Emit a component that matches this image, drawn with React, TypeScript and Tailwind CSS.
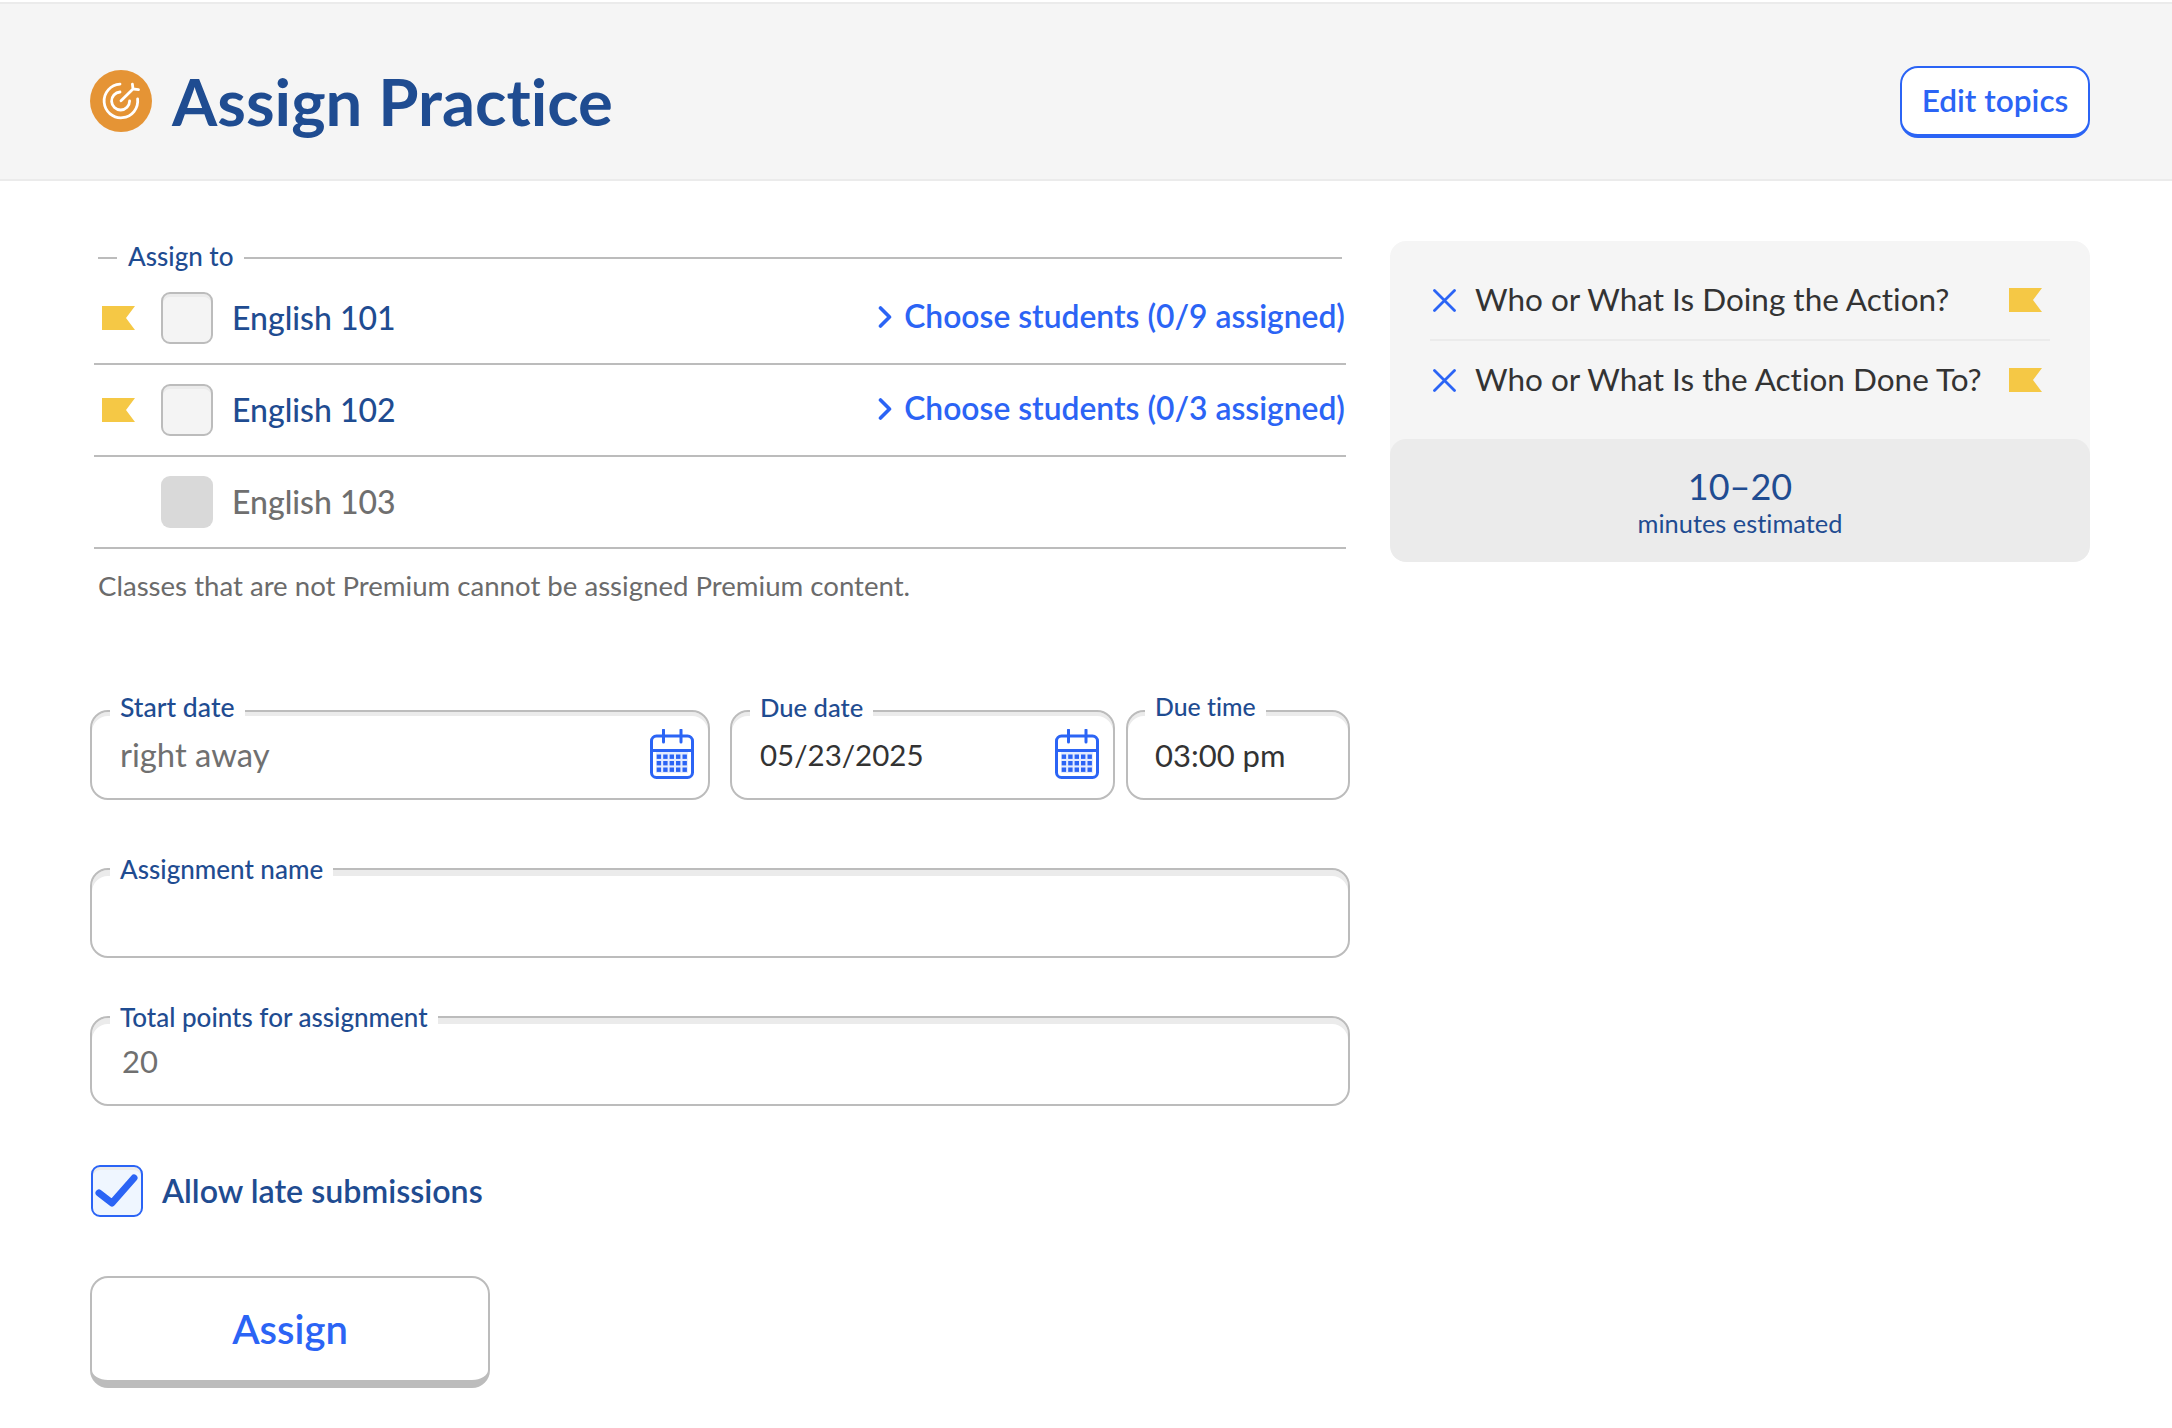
import React from 'react';

const NAVY = 'text-[#1f4c91]';

const Flag = () => (
  <svg width="33" height="24" viewBox="0 0 33 24" className="shrink-0">
    <polygon points="0,0 33,0 24,12 33,24 0,24" fill="#f5c845" />
  </svg>
);

const TargetIcon = () => (
  <svg width="62" height="62" viewBox="0 0 62 62" className="shrink-0">
    <circle cx="31" cy="31" r="31" fill="#e59435" />
    <g fill="none" stroke="#fff" strokeWidth="2.8" strokeLinecap="round">
      <path d="M30 14.2A16.8 16.8 0 1 0 47.6 29" />
      <path d="M30 22A9 9 0 1 0 39.6 31" />
      <path d="M31 30.8L43 19M42.4 14.2L43 19L48.5 19.6" />
    </g>
  </svg>
);

const CalendarIcon = () => (
  <svg width="44" height="50" viewBox="0 0 44 50" className="shrink-0">
    <rect x="1.5" y="7" width="41" height="41.5" rx="5" fill="#fff" stroke="#2b64f5" strokeWidth="3" />
    <rect x="6" y="23" width="32" height="21" fill="#e3ebfe" />
    <path d="M2 21.5H42" stroke="#2b64f5" strokeWidth="3" />
    <path d="M13.5 1V13M31 1V13" stroke="#2b64f5" strokeWidth="3" strokeLinecap="round" />
    {[25.5, 32, 38.5].map((y) =>
      [6.7, 13.2, 19.6, 26, 32.5].map((x) => (
        <rect key={`${x}-${y}`} x={x} y={y} width="4.4" height="4.4" fill="#2b64f5" />
      ))
    )}
  </svg>
);

const CloseIcon = () => (
  <svg width="23" height="23" viewBox="0 0 23 23" className="shrink-0">
    <path d="M1.5 1.5L21.5 21.5M21.5 1.5L1.5 21.5" stroke="#2b64f5" strokeWidth="2.8" strokeLinecap="round" />
  </svg>
);

const ChevronIcon = () => (
  <svg width="14" height="24" viewBox="0 0 14 24" className="shrink-0">
    <path d="M2.5 3L11.5 12L2.5 21" fill="none" stroke="#2b64f5" strokeWidth="3.6" strokeLinecap="round" strokeLinejoin="round" />
  </svg>
);

const ClassRow = ({ name, assigned, disabled }: { name: string; assigned?: string; disabled?: boolean }) => (
  <div className="flex h-[92px] items-center border-b-2 border-[#bcbcbc] pl-[8px] pr-[1px]">
    <div className="w-[33px] shrink-0">{!disabled && <Flag />}</div>
    <div
      className={
        disabled
          ? 'ml-[26px] h-[52px] w-[52px] shrink-0 rounded-[9px] bg-[#d9d9d9]'
          : 'ml-[26px] h-[52px] w-[52px] shrink-0 rounded-[9px] border-2 border-[#bcbcbc] bg-[#f4f4f4] shadow-[inset_0_3px_0_#ebebeb]'
      }
    />
    <span className={`ml-[19px] text-[32px] font-medium ${disabled ? 'text-[#6f6f6f]' : NAVY}`}>{name}</span>
    {assigned && (
      <span className="ml-auto flex items-center gap-[12px] text-[#2b64f5] text-[31.8px] font-semibold -mt-[2px]">
        <ChevronIcon />
        Choose students ({assigned} assigned)
      </span>
    )}
  </div>
);

const Field = ({
  label,
  value,
  valueClass,
  calendar,
  className,
  shadow,
  labelTop,
  labelClass = 'text-[26px]',
}: {
  label: string;
  value?: string;
  valueClass?: string;
  calendar?: boolean;
  className: string;
  shadow: string;
  labelTop: string;
  labelClass?: string;
}) => (
  <div className={`relative flex h-[90px] items-center rounded-[18px] border-2 border-[#bcbcbc] pl-[28px] pr-[14px] ${shadow} ${className}`}>
    <span className={`absolute left-[18px] bg-white px-[10px] font-medium leading-[28px] whitespace-nowrap ${labelClass} ${labelTop} ${NAVY}`}>
      {label}
    </span>
    <span className={valueClass}>{value}</span>
    {calendar && <div className="ml-auto -mt-[2px]"><CalendarIcon /></div>}
  </div>
);

export default function App() {
  return (
    <div className="min-h-[1428px] bg-white pt-[2px] font-[Lato,sans-serif] [font-variant-ligatures:none]">
      <header className="flex h-[179px] items-center justify-between border-y-2 border-[#ebebeb] bg-[#f5f5f5] pl-[90px] pr-[82px] pt-[20px]">
        <div className="flex items-center gap-[20px]">
          <TargetIcon />
          <h1 className="text-[65.2px] font-bold leading-none text-[#1f4c91]">Assign Practice</h1>
        </div>
        <button className="h-[72px] w-[190px] rounded-[18px] border-2 border-b-4 border-[#2b64f5] bg-white text-[31.6px] font-semibold text-[#2b64f5]">
          Edit topics
        </button>
      </header>

      <main className="flex pl-[90px]">
        <div className="w-[1260px]">
          <section className="ml-[4px] w-[1252px] pt-[62px]">
            <div className="flex h-[30px] items-center gap-[11px] px-[4px]">
              <span className="h-[2px] w-[19px] bg-[#bcbcbc]" />
              <span className={`-mt-[3px] text-[26px] font-medium ${NAVY}`}>Assign to</span>
              <span className="h-[2px] flex-1 bg-[#bcbcbc]" />
            </div>
            <ClassRow name="English 101" assigned="0/9" />
            <ClassRow name="English 102" assigned="0/3" />
            <ClassRow name="English 103" disabled />
            <p className="ml-[4px] mt-[22px] text-[27.6px] leading-[30px] text-[#6b6b6b]">
              Classes that are not Premium cannot be assigned Premium content.
            </p>
          </section>

          <div className="mt-[109px] flex">
            <Field label="Start date" value="right away" valueClass="text-[32.8px] text-[#707070]" calendar className="w-[620px]" shadow="shadow-[inset_0_4px_0_#ebebeb]" labelTop="-top-[19px]" labelClass="text-[26.6px]" />
            <Field label="Due date" value="05/23/2025" valueClass="text-[29.5px] text-[#333]" calendar className="ml-[20px] w-[385px]" shadow="shadow-[inset_0_4px_0_#ebebeb]" labelTop="-top-[19px]" labelClass="text-[25.6px]" />
            <Field label="Due time" value="03:00 pm" valueClass="-ml-[1px] text-[31px] text-[#333]" className="ml-[11px] w-[224px]" shadow="shadow-[inset_0_4px_0_#ebebeb]" labelTop="-top-[19px]" labelClass="-ml-[1px] text-[24.8px]" />
          </div>
          <Field label="Assignment name" className="mt-[68px] w-[1260px]" shadow="shadow-[inset_0_6px_0_#ebebeb]" labelTop="-top-[15px]" />
          <Field label="Total points for assignment" value="20" valueClass="ml-[2px] text-[31px] text-[#707070]" className="mt-[58px] w-[1260px]" shadow="shadow-[inset_0_6px_0_#ebebeb]" labelTop="-top-[15px]" />

          <div className="mt-[59px] flex items-center pl-[1px]">
            <div className="h-[52px] w-[52px] rounded-[9px] border-2 border-[#2b64f5] bg-[#eff6ff] shadow-[inset_0_3px_0_#ebebeb]">
              <svg width="48" height="48" viewBox="0 0 48 48">
                <path d="M6 26L19 36L41 11" fill="none" stroke="#2b64f5" strokeWidth="7" strokeLinecap="round" strokeLinejoin="round" />
              </svg>
            </div>
            <span className={`ml-[19px] text-[32.2px] font-semibold ${NAVY}`}>Allow late submissions</span>
          </div>

          <button className="mt-[59px] h-[112px] w-[400px] rounded-[18px] border-2 border-b-8 border-[#bcbcbc] bg-white text-[40px] font-semibold text-[#2b64f5]">
            Assign
          </button>
        </div>

        <aside className="ml-[40px] mt-[60px] flex h-[321px] w-[700px] flex-col overflow-hidden rounded-[16px] bg-[#f5f5f5]">
          <div className="flex-1 px-[40px] pt-[20px]">
            <div className="flex h-[80px] items-center border-b-2 border-[#ebebeb] pl-[3px] pr-[8px]">
              <CloseIcon />
              <span className="ml-[19px] text-[31.5px] text-[#333]">Who or What Is Doing the Action?</span>
              <div className="ml-auto"><Flag /></div>
            </div>
            <div className="flex h-[78px] items-center pl-[3px] pr-[8px]">
              <CloseIcon />
              <span className="ml-[19px] text-[31.5px] text-[#333]">Who or What Is the Action Done To?</span>
              <div className="ml-auto"><Flag /></div>
            </div>
          </div>
          <div className="flex h-[123px] flex-col items-center rounded-[16px] bg-[#ebebeb] pt-[24px]">
            <span className="text-[36px] leading-[46px] text-[#1f4c91]">10–20</span>
            <span className="text-[25.4px] leading-[28px] text-[#1f4c91]">minutes estimated</span>
          </div>
        </aside>
      </main>
    </div>
  );
}
